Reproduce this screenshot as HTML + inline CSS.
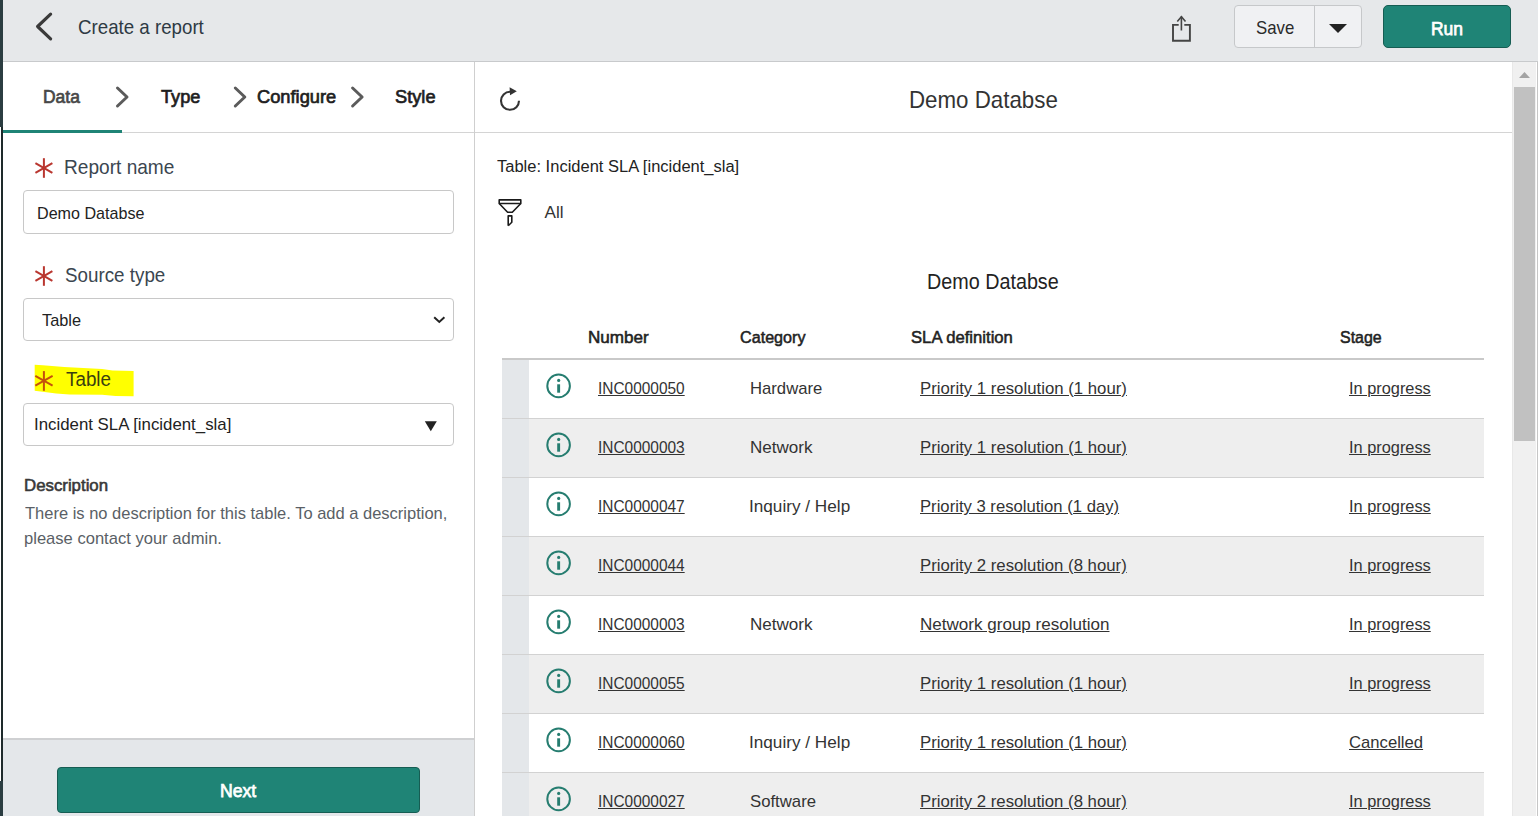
<!DOCTYPE html>
<html><head><meta charset="utf-8">
<style>
html,body{margin:0;padding:0;}
body{width:1538px;height:816px;overflow:hidden;position:relative;background:#fff;font-family:"Liberation Sans",sans-serif;}
.a{position:absolute;box-sizing:border-box;}
.t{position:absolute;white-space:nowrap;transform-origin:0 0;font-family:"Liberation Sans",sans-serif;}
svg{position:absolute;overflow:visible;}
</style></head><body>
<!-- header -->
<div class="a" style="left:0;top:0;width:1538px;height:61px;background:#e6e8ea;"></div>
<div class="a" style="left:0;top:61px;width:1538px;height:1px;background:#c8cacc;"></div>
<!-- left dark window border -->
<div class="a" style="left:0;top:0;width:3px;height:127px;background:#2b3d41;"></div>
<div class="a" style="left:1px;top:127px;width:2px;height:654px;background:#1e2a2b;"></div>
<div class="a" style="left:0;top:781px;width:3px;height:35px;background:#2b3d41;"></div>
<!-- back chevron -->
<svg style="left:0;top:0" width="1" height="1"><polyline points="50.6,14.2 37.6,26.5 50.6,38.8" fill="none" stroke="#3a3a3a" stroke-width="3.2" stroke-linecap="round" stroke-linejoin="round"/></svg>
<!-- share icon -->
<svg style="left:0;top:0" width="1" height="1" fill="none" stroke="#444" stroke-width="1.9">
<polyline points="1178.7,24.9 1173,24.9 1173,40.7 1189.9,40.7 1189.9,24.9 1184.3,24.9"/>
<line x1="1181.4" y1="16.5" x2="1181.4" y2="30.5" stroke-width="1.6"/>
<polyline points="1177.3,21.5 1181.4,16.8 1185.5,21.5" stroke-width="1.6"/>
</svg>
<!-- save group -->
<div class="a" style="left:1234px;top:5px;width:128px;height:43px;background:#f0f1f3;border:1px solid #c6c8ca;border-radius:4px;"></div>
<div class="a" style="left:1314px;top:6px;width:1px;height:41px;background:#c6c8ca;"></div>
<svg style="left:0;top:0" width="1" height="1"><polygon points="1329,24 1347,24 1338,33" fill="#222"/></svg>
<!-- run -->
<div class="a" style="left:1383px;top:5px;width:128px;height:43px;background:#1f8476;border:1px solid #165d53;border-radius:5px;"></div>

<!-- left panel -->
<div class="a" style="left:474px;top:62px;width:1px;height:754px;background:#cfcfcf;"></div>
<div class="a" style="left:3px;top:132px;width:471px;height:1px;background:#d4d4d4;"></div>
<div class="a" style="left:3px;top:130px;width:119px;height:3px;background:#1f8476;"></div>
<!-- tab chevrons -->
<svg style="left:0;top:0" width="1" height="1" fill="none" stroke="#5b5b5b" stroke-width="3" stroke-linecap="round" stroke-linejoin="round">
<polyline points="117.5,88 127,97 117.5,106"/>
<polyline points="235.3,88 244.8,97 235.3,106"/>
<polyline points="352.6,88 362.1,97 352.6,106"/>
</svg>
<!-- asterisks -->
<svg style="left:0;top:0" width="1" height="1" stroke-width="2">
<g stroke="#b9362f"><line x1="43.9" y1="158.2" x2="43.9" y2="177.8"/><line x1="35.4" y1="163.1" x2="52.4" y2="172.9"/><line x1="35.4" y1="172.9" x2="52.4" y2="163.1"/></g>
<g stroke="#b9362f"><line x1="43.9" y1="266.2" x2="43.9" y2="285.8"/><line x1="35.4" y1="271.1" x2="52.4" y2="280.9"/><line x1="35.4" y1="280.9" x2="52.4" y2="271.1"/></g>
</svg>
<!-- highlight -->
<svg style="left:0;top:0" width="1" height="1"><polygon points="34.7,364.8 42.8,365.2 64.3,367 102.1,368.9 112.5,370.4 133.6,371.1 133.6,396.3 115.5,396 102.1,394.8 69.5,394.5 56.2,393.4 34.7,390.8" fill="#ffff00"/></svg>
<svg style="left:0;top:0" width="1" height="1" stroke-width="2">
<g stroke="#c4500c"><line x1="43.9" y1="371.1" x2="43.9" y2="390.8"/><line x1="35.3" y1="375.8" x2="52.6" y2="385.6"/><line x1="35.3" y1="385.6" x2="52.6" y2="375.8"/></g>
</svg>
<!-- inputs -->
<div class="a" style="left:23px;top:190px;width:431px;height:44px;border:1px solid #c8c8c8;border-radius:4px;"></div>
<div class="a" style="left:23px;top:298px;width:431px;height:43px;border:1px solid #c8c8c8;border-radius:4px;"></div>
<svg style="left:0;top:0" width="1" height="1"><polyline points="434.2,317.2 439.3,322 444.4,317.2" fill="none" stroke="#222" stroke-width="2"/></svg>
<div class="a" style="left:23px;top:403px;width:431px;height:43px;border:1px solid #c8c8c8;border-radius:4px;"></div>
<svg style="left:0;top:0" width="1" height="1"><polygon points="424.8,421.2 436.8,421.2 430.8,431.3" fill="#222"/></svg>
<!-- footer -->
<div class="a" style="left:3px;top:738px;width:471px;height:78px;background:#e4e7ea;"></div>
<div class="a" style="left:3px;top:738px;width:471px;height:2px;background:#cfd0d2;"></div>
<div class="a" style="left:57px;top:767px;width:363px;height:46px;background:#1f8476;border:1px solid #165d53;border-radius:4px;"></div>

<!-- right panel -->
<div class="a" style="left:475px;top:132px;width:1037px;height:1px;background:#d4d4d4;"></div>
<svg style="left:0;top:0" width="1" height="1" fill="none" stroke="#333" stroke-width="2.1">
<path d="M510,91.8 A9,9 0 1 0 519,100.8"/>
</svg>
<svg style="left:0;top:0" width="1" height="1"><polygon points="509.6,87.2 510,95.2 516.8,91.3" fill="#333"/></svg>
<!-- filter icon -->
<svg style="left:0;top:0" width="1" height="1" fill="none" stroke="#1a1a1a" stroke-width="1.6" stroke-linejoin="round">
<rect x="499.2" y="199.9" width="21.6" height="3.6"/>
<polyline points="499.2,203.5 507.6,212.3 512.3,212.3 520.8,203.5"/>
<polyline points="508.2,225.8 508.2,215.9 511.8,215.9 511.8,222.3 508.2,225.8"/>
</svg>
<!-- table -->
<div class="a" style="left:502px;top:358px;width:982px;height:2px;background:#c9c9c9;"></div>
<div id="rows"></div>
<div class="a" style="left:529px;top:360px;width:955px;height:58px;background:#ffffff;"></div>
<div class="a" style="left:502px;top:360px;width:27px;height:58px;background:#e4e7ea;"></div>
<div class="a" style="left:502px;top:418px;width:982px;height:1px;background:#d2d2d2;"></div>
<svg style="left:0;top:0" width="1" height="1"><circle cx="558.6" cy="385.9" r="11.3" fill="none" stroke="#267d70" stroke-width="2"/><circle cx="558.7" cy="380.4" r="1.6" fill="#267d70"/><rect x="557.2" y="384.3" width="2.9" height="8.4" fill="#267d70"/></svg>
<div class="a" style="left:529px;top:419px;width:955px;height:58px;background:#eeeeee;"></div>
<div class="a" style="left:502px;top:419px;width:27px;height:58px;background:#e4e7ea;"></div>
<div class="a" style="left:502px;top:477px;width:982px;height:1px;background:#d2d2d2;"></div>
<svg style="left:0;top:0" width="1" height="1"><circle cx="558.6" cy="444.9" r="11.3" fill="none" stroke="#267d70" stroke-width="2"/><circle cx="558.7" cy="439.4" r="1.6" fill="#267d70"/><rect x="557.2" y="443.3" width="2.9" height="8.4" fill="#267d70"/></svg>
<div class="a" style="left:529px;top:478px;width:955px;height:58px;background:#ffffff;"></div>
<div class="a" style="left:502px;top:478px;width:27px;height:58px;background:#e4e7ea;"></div>
<div class="a" style="left:502px;top:536px;width:982px;height:1px;background:#d2d2d2;"></div>
<svg style="left:0;top:0" width="1" height="1"><circle cx="558.6" cy="503.9" r="11.3" fill="none" stroke="#267d70" stroke-width="2"/><circle cx="558.7" cy="498.4" r="1.6" fill="#267d70"/><rect x="557.2" y="502.3" width="2.9" height="8.4" fill="#267d70"/></svg>
<div class="a" style="left:529px;top:537px;width:955px;height:58px;background:#eeeeee;"></div>
<div class="a" style="left:502px;top:537px;width:27px;height:58px;background:#e4e7ea;"></div>
<div class="a" style="left:502px;top:595px;width:982px;height:1px;background:#d2d2d2;"></div>
<svg style="left:0;top:0" width="1" height="1"><circle cx="558.6" cy="562.9" r="11.3" fill="none" stroke="#267d70" stroke-width="2"/><circle cx="558.7" cy="557.4" r="1.6" fill="#267d70"/><rect x="557.2" y="561.3" width="2.9" height="8.4" fill="#267d70"/></svg>
<div class="a" style="left:529px;top:596px;width:955px;height:58px;background:#ffffff;"></div>
<div class="a" style="left:502px;top:596px;width:27px;height:58px;background:#e4e7ea;"></div>
<div class="a" style="left:502px;top:654px;width:982px;height:1px;background:#d2d2d2;"></div>
<svg style="left:0;top:0" width="1" height="1"><circle cx="558.6" cy="621.9" r="11.3" fill="none" stroke="#267d70" stroke-width="2"/><circle cx="558.7" cy="616.4" r="1.6" fill="#267d70"/><rect x="557.2" y="620.3" width="2.9" height="8.4" fill="#267d70"/></svg>
<div class="a" style="left:529px;top:655px;width:955px;height:58px;background:#eeeeee;"></div>
<div class="a" style="left:502px;top:655px;width:27px;height:58px;background:#e4e7ea;"></div>
<div class="a" style="left:502px;top:713px;width:982px;height:1px;background:#d2d2d2;"></div>
<svg style="left:0;top:0" width="1" height="1"><circle cx="558.6" cy="680.9" r="11.3" fill="none" stroke="#267d70" stroke-width="2"/><circle cx="558.7" cy="675.4" r="1.6" fill="#267d70"/><rect x="557.2" y="679.3" width="2.9" height="8.4" fill="#267d70"/></svg>
<div class="a" style="left:529px;top:714px;width:955px;height:58px;background:#ffffff;"></div>
<div class="a" style="left:502px;top:714px;width:27px;height:58px;background:#e4e7ea;"></div>
<div class="a" style="left:502px;top:772px;width:982px;height:1px;background:#d2d2d2;"></div>
<svg style="left:0;top:0" width="1" height="1"><circle cx="558.6" cy="739.9" r="11.3" fill="none" stroke="#267d70" stroke-width="2"/><circle cx="558.7" cy="734.4" r="1.6" fill="#267d70"/><rect x="557.2" y="738.3" width="2.9" height="8.4" fill="#267d70"/></svg>
<div class="a" style="left:529px;top:773px;width:955px;height:58px;background:#eeeeee;"></div>
<div class="a" style="left:502px;top:773px;width:27px;height:58px;background:#e4e7ea;"></div>
<div class="a" style="left:502px;top:831px;width:982px;height:1px;background:#d2d2d2;"></div>
<svg style="left:0;top:0" width="1" height="1"><circle cx="558.6" cy="798.9" r="11.3" fill="none" stroke="#267d70" stroke-width="2"/><circle cx="558.7" cy="793.4" r="1.6" fill="#267d70"/><rect x="557.2" y="797.3" width="2.9" height="8.4" fill="#267d70"/></svg>
<!-- scrollbar -->
<div class="a" style="left:1512px;top:62px;width:26px;height:754px;background:#fff;"></div><div class="a" style="left:1512px;top:62px;width:24px;height:754px;background:#f0f0f0;border-left:1px solid #e8e8e8;"></div>
<div class="a" style="left:1514px;top:87px;width:21px;height:354px;background:#c1c1c1;"></div>
<svg style="left:0;top:0" width="1" height="1"><polygon points="1519,78 1530,78 1524.5,72" fill="#a3a3a3"/></svg>
<div class="a" style="left:1537px;top:62px;width:1px;height:754px;background:#c6c6c6;"></div>

<div class="t" id="t0" style="left:77.84px;top:17.79px;font-size:19.62px;line-height:19.62px;font-weight:400;color:#2e3a44;transform:scaleX(0.9539);">Create a report</div>
<div class="t" id="t1" style="left:1255.53px;top:19.25px;font-size:18.60px;line-height:18.60px;font-weight:400;color:#2a2a2a;transform:scaleX(0.9027);">Save</div>
<div class="t" id="t2" style="left:1430.70px;top:18.76px;font-size:19.19px;line-height:19.19px;font-weight:400;color:#ffffff;transform:scaleX(0.9091);-webkit-text-stroke:0.75px #ffffff;">Run</div>
<div class="t" id="t3" style="left:43.25px;top:88.03px;font-size:18.75px;line-height:18.75px;font-weight:400;color:#474747;transform:scaleX(0.9308);-webkit-text-stroke:0.7px #474747;">Data</div>
<div class="t" id="t4" style="left:160.60px;top:88.03px;font-size:18.75px;line-height:18.75px;font-weight:400;color:#1e1e1e;transform:scaleX(0.9702);-webkit-text-stroke:0.7px #1e1e1e;">Type</div>
<div class="t" id="t5" style="left:257.41px;top:88.03px;font-size:18.75px;line-height:18.75px;font-weight:400;color:#1e1e1e;transform:scaleX(0.9750);-webkit-text-stroke:0.7px #1e1e1e;">Configure</div>
<div class="t" id="t6" style="left:395.03px;top:88.03px;font-size:18.75px;line-height:18.75px;font-weight:400;color:#1e1e1e;transform:scaleX(0.9727);-webkit-text-stroke:0.7px #1e1e1e;">Style</div>
<div class="t" id="t7" style="left:64.04px;top:158.39px;font-size:19.62px;line-height:19.62px;font-weight:400;color:#3b4650;transform:scaleX(0.9739);">Report name</div>
<div class="t" id="t8" style="left:37.27px;top:204.50px;font-size:17.01px;line-height:17.01px;font-weight:400;color:#222;transform:scaleX(0.9474);">Demo Databse</div>
<div class="t" id="t9" style="left:65.04px;top:266.39px;font-size:19.62px;line-height:19.62px;font-weight:400;color:#3b4650;transform:scaleX(0.9583);">Source type</div>
<div class="t" id="t10" style="left:42.02px;top:312.28px;font-size:17.15px;line-height:17.15px;font-weight:400;color:#222;transform:scaleX(0.9527);">Table</div>
<div class="t" id="t11" style="left:66.03px;top:369.47px;font-size:20.35px;line-height:20.35px;font-weight:400;color:#3a3f10;transform:scaleX(0.9259);">Table</div>
<div class="t" id="t12" style="left:33.98px;top:416.87px;font-size:16.57px;line-height:16.57px;font-weight:400;color:#222;transform:scaleX(1.0157);">Incident SLA [incident_sla]</div>
<div class="t" id="t13" style="left:23.52px;top:478.07px;font-size:15.99px;line-height:15.99px;font-weight:400;color:#383838;transform:scaleX(1.0513);-webkit-text-stroke:0.55px #383838;">Description</div>
<div class="t" id="t14" style="left:24.58px;top:505.87px;font-size:15.99px;line-height:15.99px;font-weight:400;color:#5a5f66;transform:scaleX(1.0319);">There is no description for this table. To add a description,</div>
<div class="t" id="t15" style="left:23.54px;top:530.77px;font-size:15.99px;line-height:15.99px;font-weight:400;color:#5a5f66;transform:scaleX(1.0362);">please contact your admin.</div>
<div class="t" id="t16" style="left:220.04px;top:782.37px;font-size:18.46px;line-height:18.46px;font-weight:400;color:#ffffff;transform:scaleX(0.9568);-webkit-text-stroke:0.75px #ffffff;">Next</div>
<div class="t" id="t17" style="left:909.09px;top:88.99px;font-size:23.40px;line-height:23.40px;font-weight:400;color:#333;transform:scaleX(0.9537);">Demo Databse</div>
<div class="t" id="t18" style="left:496.60px;top:158.30px;font-size:16.42px;line-height:16.42px;font-weight:400;color:#222;transform:scaleX(1.0059);">Table: Incident SLA [incident_sla]</div>
<div class="t" id="t19" style="left:544.60px;top:204.18px;font-size:17.15px;line-height:17.15px;font-weight:400;color:#333;transform:scaleX(1.0000);">All</div>
<div class="t" id="t20" style="left:927.38px;top:271.37px;font-size:21.66px;line-height:21.66px;font-weight:400;color:#222;transform:scaleX(0.9120);">Demo Databse</div>
<div class="t" id="t21" style="left:588.00px;top:329.48px;font-size:17.15px;line-height:17.15px;font-weight:400;color:#222;transform:scaleX(0.9967);-webkit-text-stroke:0.55px #222;">Number</div>
<div class="t" id="t22" style="left:740.06px;top:329.48px;font-size:17.15px;line-height:17.15px;font-weight:400;color:#222;transform:scaleX(0.9420);-webkit-text-stroke:0.55px #222;">Category</div>
<div class="t" id="t23" style="left:911.03px;top:329.48px;font-size:17.15px;line-height:17.15px;font-weight:400;color:#222;transform:scaleX(0.9719);-webkit-text-stroke:0.55px #222;">SLA definition</div>
<div class="t" id="t24" style="left:1340.07px;top:329.48px;font-size:17.15px;line-height:17.15px;font-weight:400;color:#222;transform:scaleX(0.9302);-webkit-text-stroke:0.55px #222;">Stage</div>
<div class="t" id="t25" style="left:597.95px;top:380.20px;font-size:17.01px;line-height:17.01px;font-weight:400;color:#333;transform:scaleX(0.9079);text-decoration:underline;">INC0000050</div>
<div class="t" id="t26" style="left:750.22px;top:380.20px;font-size:17.01px;line-height:17.01px;font-weight:400;color:#333;transform:scaleX(0.9806);">Hardware</div>
<div class="t" id="t27" style="left:919.82px;top:380.20px;font-size:17.01px;line-height:17.01px;font-weight:400;color:#333;transform:scaleX(0.9865);text-decoration:underline;">Priority 1 resolution (1 hour)</div>
<div class="t" id="t28" style="left:1348.86px;top:380.20px;font-size:17.01px;line-height:17.01px;font-weight:400;color:#333;transform:scaleX(0.9615);text-decoration:underline;">In progress</div>
<div class="t" id="t29" style="left:597.95px;top:439.20px;font-size:17.01px;line-height:17.01px;font-weight:400;color:#333;transform:scaleX(0.9079);text-decoration:underline;">INC0000003</div>
<div class="t" id="t30" style="left:750.20px;top:439.20px;font-size:17.01px;line-height:17.01px;font-weight:400;color:#333;transform:scaleX(1.0034);">Network</div>
<div class="t" id="t31" style="left:919.82px;top:439.20px;font-size:17.01px;line-height:17.01px;font-weight:400;color:#333;transform:scaleX(0.9865);text-decoration:underline;">Priority 1 resolution (1 hour)</div>
<div class="t" id="t32" style="left:1348.86px;top:439.20px;font-size:17.01px;line-height:17.01px;font-weight:400;color:#333;transform:scaleX(0.9615);text-decoration:underline;">In progress</div>
<div class="t" id="t33" style="left:597.95px;top:498.20px;font-size:17.01px;line-height:17.01px;font-weight:400;color:#333;transform:scaleX(0.9079);text-decoration:underline;">INC0000047</div>
<div class="t" id="t34" style="left:749.19px;top:498.20px;font-size:17.01px;line-height:17.01px;font-weight:400;color:#333;transform:scaleX(1.0102);">Inquiry / Help</div>
<div class="t" id="t35" style="left:919.83px;top:498.20px;font-size:17.01px;line-height:17.01px;font-weight:400;color:#333;transform:scaleX(0.9800);text-decoration:underline;">Priority 3 resolution (1 day)</div>
<div class="t" id="t36" style="left:1348.86px;top:498.20px;font-size:17.01px;line-height:17.01px;font-weight:400;color:#333;transform:scaleX(0.9615);text-decoration:underline;">In progress</div>
<div class="t" id="t37" style="left:597.95px;top:557.20px;font-size:17.01px;line-height:17.01px;font-weight:400;color:#333;transform:scaleX(0.9079);text-decoration:underline;">INC0000044</div>
<div class="t" id="t38" style="left:919.82px;top:557.20px;font-size:17.01px;line-height:17.01px;font-weight:400;color:#333;transform:scaleX(0.9855);text-decoration:underline;">Priority 2 resolution (8 hour)</div>
<div class="t" id="t39" style="left:1348.86px;top:557.20px;font-size:17.01px;line-height:17.01px;font-weight:400;color:#333;transform:scaleX(0.9615);text-decoration:underline;">In progress</div>
<div class="t" id="t40" style="left:597.95px;top:616.20px;font-size:17.01px;line-height:17.01px;font-weight:400;color:#333;transform:scaleX(0.9079);text-decoration:underline;">INC0000003</div>
<div class="t" id="t41" style="left:750.20px;top:616.20px;font-size:17.01px;line-height:17.01px;font-weight:400;color:#333;transform:scaleX(1.0034);">Network</div>
<div class="t" id="t42" style="left:919.79px;top:616.20px;font-size:17.01px;line-height:17.01px;font-weight:400;color:#333;transform:scaleX(1.0027);text-decoration:underline;">Network group resolution</div>
<div class="t" id="t43" style="left:1348.86px;top:616.20px;font-size:17.01px;line-height:17.01px;font-weight:400;color:#333;transform:scaleX(0.9615);text-decoration:underline;">In progress</div>
<div class="t" id="t44" style="left:597.95px;top:675.20px;font-size:17.01px;line-height:17.01px;font-weight:400;color:#333;transform:scaleX(0.9079);text-decoration:underline;">INC0000055</div>
<div class="t" id="t45" style="left:919.82px;top:675.20px;font-size:17.01px;line-height:17.01px;font-weight:400;color:#333;transform:scaleX(0.9865);text-decoration:underline;">Priority 1 resolution (1 hour)</div>
<div class="t" id="t46" style="left:1348.86px;top:675.20px;font-size:17.01px;line-height:17.01px;font-weight:400;color:#333;transform:scaleX(0.9615);text-decoration:underline;">In progress</div>
<div class="t" id="t47" style="left:597.95px;top:734.20px;font-size:17.01px;line-height:17.01px;font-weight:400;color:#333;transform:scaleX(0.9079);text-decoration:underline;">INC0000060</div>
<div class="t" id="t48" style="left:749.19px;top:734.20px;font-size:17.01px;line-height:17.01px;font-weight:400;color:#333;transform:scaleX(1.0102);">Inquiry / Help</div>
<div class="t" id="t49" style="left:919.82px;top:734.20px;font-size:17.01px;line-height:17.01px;font-weight:400;color:#333;transform:scaleX(0.9865);text-decoration:underline;">Priority 1 resolution (1 hour)</div>
<div class="t" id="t50" style="left:1348.81px;top:734.20px;font-size:17.01px;line-height:17.01px;font-weight:400;color:#333;transform:scaleX(0.9799);text-decoration:underline;">Cancelled</div>
<div class="t" id="t51" style="left:597.95px;top:793.20px;font-size:17.01px;line-height:17.01px;font-weight:400;color:#333;transform:scaleX(0.9079);text-decoration:underline;">INC0000027</div>
<div class="t" id="t52" style="left:750.22px;top:793.20px;font-size:17.01px;line-height:17.01px;font-weight:400;color:#333;transform:scaleX(0.9846);">Software</div>
<div class="t" id="t53" style="left:919.82px;top:793.20px;font-size:17.01px;line-height:17.01px;font-weight:400;color:#333;transform:scaleX(0.9855);text-decoration:underline;">Priority 2 resolution (8 hour)</div>
<div class="t" id="t54" style="left:1348.86px;top:793.20px;font-size:17.01px;line-height:17.01px;font-weight:400;color:#333;transform:scaleX(0.9615);text-decoration:underline;">In progress</div>
</body></html>
